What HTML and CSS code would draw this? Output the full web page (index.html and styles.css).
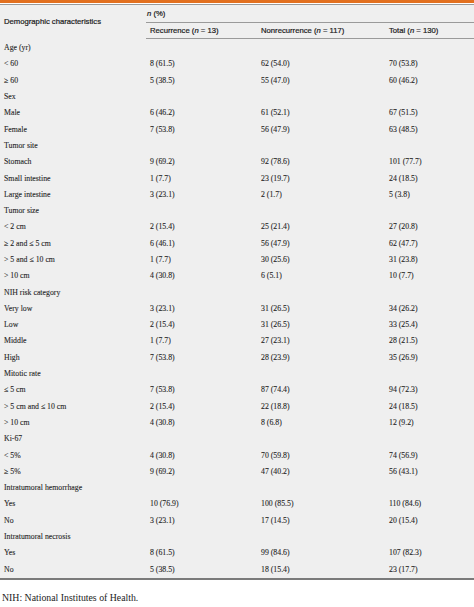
FILE: index.html
```html
<!DOCTYPE html>
<html>
<head>
<meta charset="utf-8">
<link rel="stylesheet" href="styles.css">
</head>
<body>
<div class="topbar"></div>
<table class="data">
<colgroup><col class="c1"><col class="c2"><col class="c3"><col class="c4"></colgroup>
<thead>
<tr class="h1"><th rowspan="2" class="demo">Demographic characteristics</th><th colspan="3" class="np"><i>n</i> (%)</th></tr>
<tr class="h2"><th>Recurrence (<i>n</i> = 13)</th><th>Nonrecurrence (<i>n</i> = 117)</th><th>Total (<i>n</i> = 130)</th></tr>
</thead>
<tbody>
<tr><td>Age (yr)</td><td></td><td></td><td></td></tr>
<tr><td>&lt; 60</td><td>8 (61.5)</td><td>62 (54.0)</td><td>70 (53.8)</td></tr>
<tr><td>≥ 60</td><td>5 (38.5)</td><td>55 (47.0)</td><td>60 (46.2)</td></tr>
<tr><td>Sex</td><td></td><td></td><td></td></tr>
<tr><td>Male</td><td>6 (46.2)</td><td>61 (52.1)</td><td>67 (51.5)</td></tr>
<tr><td>Female</td><td>7 (53.8)</td><td>56 (47.9)</td><td>63 (48.5)</td></tr>
<tr><td>Tumor site</td><td></td><td></td><td></td></tr>
<tr><td>Stomach</td><td>9 (69.2)</td><td>92 (78.6)</td><td>101 (77.7)</td></tr>
<tr><td>Small intestine</td><td>1 (7.7)</td><td>23 (19.7)</td><td>24 (18.5)</td></tr>
<tr><td>Large intestine</td><td>3 (23.1)</td><td>2 (1.7)</td><td>5 (3.8)</td></tr>
<tr><td>Tumor size</td><td></td><td></td><td></td></tr>
<tr><td>&lt; 2 cm</td><td>2 (15.4)</td><td>25 (21.4)</td><td>27 (20.8)</td></tr>
<tr><td>≥ 2 and ≤ 5 cm</td><td>6 (46.1)</td><td>56 (47.9)</td><td>62 (47.7)</td></tr>
<tr><td>&gt; 5 and ≤ 10 cm</td><td>1 (7.7)</td><td>30 (25.6)</td><td>31 (23.8)</td></tr>
<tr><td>&gt; 10 cm</td><td>4 (30.8)</td><td>6 (5.1)</td><td>10 (7.7)</td></tr>
<tr><td>NIH risk category</td><td></td><td></td><td></td></tr>
<tr><td>Very low</td><td>3 (23.1)</td><td>31 (26.5)</td><td>34 (26.2)</td></tr>
<tr><td>Low</td><td>2 (15.4)</td><td>31 (26.5)</td><td>33 (25.4)</td></tr>
<tr><td>Middle</td><td>1 (7.7)</td><td>27 (23.1)</td><td>28 (21.5)</td></tr>
<tr><td>High</td><td>7 (53.8)</td><td>28 (23.9)</td><td>35 (26.9)</td></tr>
<tr><td>Mitotic rate</td><td></td><td></td><td></td></tr>
<tr><td>≤ 5 cm</td><td>7 (53.8)</td><td>87 (74.4)</td><td>94 (72.3)</td></tr>
<tr><td>&gt; 5 cm and ≤ 10 cm</td><td>2 (15.4)</td><td>22 (18.8)</td><td>24 (18.5)</td></tr>
<tr><td>&gt; 10 cm</td><td>4 (30.8)</td><td>8 (6.8)</td><td>12 (9.2)</td></tr>
<tr><td>Ki-67</td><td></td><td></td><td></td></tr>
<tr><td>&lt; 5%</td><td>4 (30.8)</td><td>70 (59.8)</td><td>74 (56.9)</td></tr>
<tr><td>≥ 5%</td><td>9 (69.2)</td><td>47 (40.2)</td><td>56 (43.1)</td></tr>
<tr><td>Intratumoral hemorrhage</td><td></td><td></td><td></td></tr>
<tr><td>Yes</td><td>10 (76.9)</td><td>100 (85.5)</td><td>110 (84.6)</td></tr>
<tr><td>No</td><td>3 (23.1)</td><td>17 (14.5)</td><td>20 (15.4)</td></tr>
<tr><td>Intratumoral necrosis</td><td></td><td></td><td></td></tr>
<tr><td>Yes</td><td>8 (61.5)</td><td>99 (84.6)</td><td>107 (82.3)</td></tr>
<tr><td>No</td><td>5 (38.5)</td><td>18 (15.4)</td><td>23 (17.7)</td></tr>
</tbody>
</table>
<p class="note">NIH: National Institutes of Health.</p>
</body>
</html>
```
FILE: styles.css
```css
html, body {
  margin: 0;
  padding: 0;
  background: #ffffff;
}
.topbar {
  height: 3px;
  background: #e2701f;
  margin-bottom: 1px;
}
.data {
  width: 474px;
  border-collapse: collapse;
  table-layout: fixed;
  background: #efefef;
  border-top: 1px solid #9a9a9a;
  border-bottom: 2px solid #7a7a7a;
  font-family: "Liberation Serif", "Times New Roman", serif;
  font-size: 7.8px;
  color: #262626;
}
.c1 { width: 146px; }
.c2 { width: 111px; }
.c3 { width: 128px; }
.c4 { width: 89px; }
.data th {
  font-family: "Liberation Sans", Arial, sans-serif;
  font-size: 7.7px;
  font-weight: normal;
  color: #1a1a1a;
  text-align: left;
  padding: 0 4px;
  -webkit-text-stroke: 0.2px #1a1a1a;
}
.h1 th { height: 17px; }
.h1 th.np { border-bottom: 1px solid #9a9a9a; padding-left: 1px; }
.h2 th { height: 15px; border-bottom: 1px solid #9a9a9a; }
.data td {
  height: 16.3px;
  padding: 0 4px;
  line-height: 10px;
  white-space: nowrap;
  -webkit-text-stroke: 0.1px #262626;
}
tbody tr:first-child td { padding-top: 1px; }
.note {
  margin: 12px 0 0 2px;
  font-family: "Liberation Serif", "Times New Roman", serif;
  font-size: 9.8px;
  color: #222222;
}
```
